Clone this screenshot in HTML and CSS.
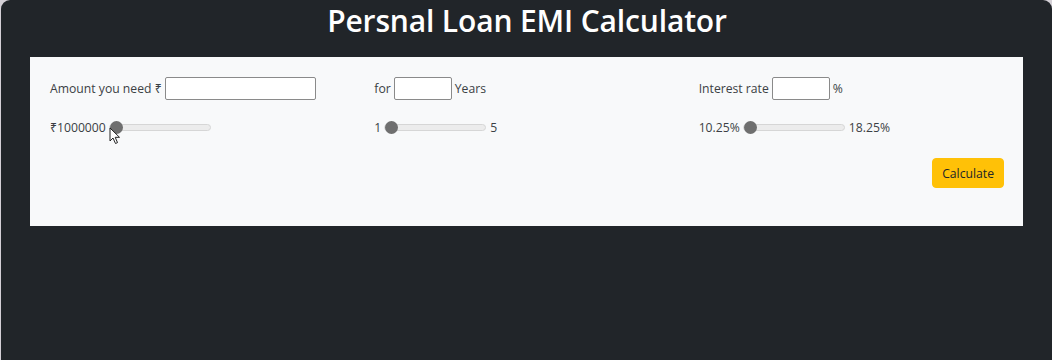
FILE: index.html
```html
<!DOCTYPE html>
<html lang="en">
<head>
<meta charset="utf-8">
<title>Persnal Loan EMI Calculator</title>
<link rel="stylesheet" href="styles.css">
</head>
<body>
<div class="app">
  <h1 class="title">Persnal Loan EMI Calculator</h1>
  <div class="card">
    <div class="row">
      <div class="col"><span class="lbl">Amount you need ₹</span><input class="field field-lg" type="text"></div>
      <div class="col"><span class="lbl">for</span><input class="field field-sm" type="text"><span class="lbl">Years</span></div>
      <div class="col"><span class="lbl">Interest rate</span><input class="field field-sm" type="text"><span class="lbl">%</span></div>
    </div>
    <div class="row sliders">
      <div class="col cursor-host"><span class="lbl">₹1000000</span><input class="range" type="range" min="1000000" max="5000000" value="1000000">
        <svg class="cursor" width="12" height="18" viewBox="0 0 12 18"><path d="M1 1 L1 14 L4 11 L6.5 16.5 L8.5 15.6 L6.2 10.3 L10.5 10.3 Z" fill="#fff" stroke="#222" stroke-width="1" stroke-linejoin="round"/></svg>
      </div>
      <div class="col"><span class="lbl">1</span><input class="range" type="range" min="1" max="5" value="1"><span class="lbl">5</span></div>
      <div class="col"><span class="lbl">10.25%</span><input class="range" type="range" min="10.25" max="18.25" step="0.25" value="10.25"><span class="lbl">18.25%</span></div>
    </div>
    <div class="actions">
      <button class="btn" type="button">Calculate</button>
    </div>
  </div>
</div>
</body>
</html>
```

FILE: styles.css
```css
html, body {
  margin: 0;
  padding: 0;
  height: 100%;
}
body {
  background: #d4d0d6;
  font-family: "Open Sans", "Noto Sans", "Liberation Sans", sans-serif;
}
.app {
  box-sizing: border-box;
  height: 360px;
  margin-left: 1px;
  background: #212529;
  border-radius: 9px 9px 0 0;
  padding: 1px 28px 0 29px;
  overflow: hidden;
}
.title {
  margin: 0;
  height: 40px;
  line-height: 40px;
  text-align: center;
  color: #ffffff;
  font-size: 30px;
  font-weight: 600;
  letter-spacing: -0.15px;
}
.card {
  margin-top: 16px;
  margin-right: 1px;
  background: #f8f9fa;
  padding: 20px 10px 38px 10px;
  color: #3b3f44;
  font-size: 12.2px;
}
.row {
  display: grid;
  grid-template-columns: repeat(3, 1fr);
}
.col {
  padding: 0 10px;
  display: flex;
  align-items: center;
  gap: 3px;
}
.sliders {
  margin-top: 19px;
  height: 14px;
}
.lbl {
  white-space: nowrap;
}
.field {
  box-sizing: border-box;
  height: 23px;
  border: 1px solid #8a8a8a;
  border-radius: 2px;
  background: #ffffff;
  padding: 0 4px;
  font: inherit;
}
.field-lg { width: 151px; }
.field-sm { width: 58px; }
.range {
  -webkit-appearance: none;
  appearance: none;
  width: 102px;
  height: 13px;
  margin: 0 1px 0 0;
  background: transparent;
}
.range::-webkit-slider-runnable-track {
  height: 7px;
  box-sizing: border-box;
  background: #ececec;
  border: 1px solid #d6d6d6;
  border-radius: 4px;
}
.range::-webkit-slider-thumb {
  -webkit-appearance: none;
  appearance: none;
  width: 13px;
  height: 13px;
  border-radius: 50%;
  background: #6f6f6f;
  margin-top: -4px;
}
.cursor-host {
  position: relative;
}
.cursor {
  position: absolute;
  left: 69px;
  top: 8px;
}
.actions {
  margin-top: 25px;
  padding: 0 9px 0 10px;
  display: flex;
  justify-content: flex-end;
}
.btn {
  height: 30px;
  padding: 0 9px;
  background: #ffc107;
  border: 1px solid #ffc107;
  border-radius: 4px;
  color: #212529;
  font: inherit;
  font-size: 12.2px;
}
```
